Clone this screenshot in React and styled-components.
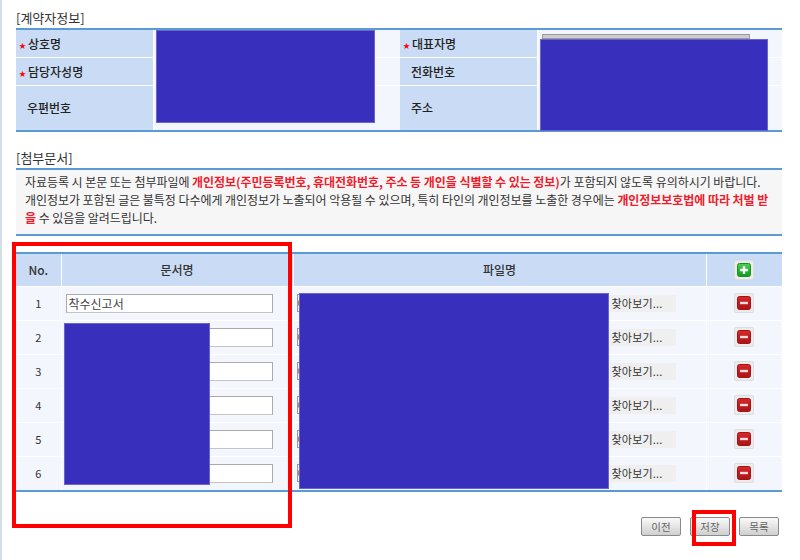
import React from "react";
import styled, { createGlobalStyle } from "styled-components";

const GlobalStyle = createGlobalStyle`
  html, body { margin: 0; padding: 0; background: #fff; }
  body { font-family: "Noto Sans CJK KR", "Noto Sans", sans-serif; font-size: 11px; color: #222; }
`;

const Page = styled.div`
  position: relative;
  width: 800px;
  height: 560px;
  overflow: hidden;
  box-sizing: border-box;
  padding: 11px 18px 0 14px;
  border-left: 2px solid #d3dee8;
`;

const SectionTitle = styled.div`
  height: 16px;
  line-height: 14px;
  font-size: 13px;
  color: #333;
  margin-bottom: 1px;
`;

const InfoTable = styled.table`
  width: 766px;
  table-layout: fixed;
  border-collapse: collapse;
  border-top: 2px solid #5b9bd5;
  border-bottom: 2px solid #5b9bd5;
  margin-bottom: 19px;
`;

const Label = styled.th`
  background: #cadcf5;
  font-weight: 500;
  font-size: 12px;
  text-align: left;
  padding: 0 0 0 ${(p) => (p.$required ? "3px" : "11px")};
  border-bottom: 1px solid #fff;
  color: #222;
  height: ${(p) => p.$h}px;
  white-space: nowrap;
  box-sizing: border-box;
`;

const Value = styled.td`
  background: #f3f6fc;
  border-bottom: 1px solid #fff;
  border-left: 1px solid #fff;
  padding: 0;
`;

const Star = styled.span`
  color: #f00;
  font-size: 7px;
  margin-right: 2px;
  vertical-align: 1px;
`;

const TopInput = styled.div`
  width: 206px;
  height: 3px;
  margin: 0 0 0 4px;
  border: 1px solid #999;
  background: #ccc;
  position: relative;
  top: -7px;
`;

const Notice = styled.div`
  width: 766px;
  height: 68px;
  box-sizing: border-box;
  background: #f6f6f6;
  border-top: 2px solid #5b9bd5;
  border-bottom: 2px solid #5b9bd5;
  padding: 3px 0 0 9px;
  font-size: 12px;
  line-height: 18px;
  letter-spacing: -0.05px;
  color: #333;
  margin-bottom: 16px;
  white-space: nowrap;
`;

const Em = styled.b`
  color: #f01c2c;
  font-weight: 700;
`;

const FileTable = styled.table`
  width: 766px;
  table-layout: fixed;
  border-collapse: collapse;
  border-top: 2px solid #5b9bd5;
  border-bottom: 2px solid #5b9bd5;
  tbody tr:last-child td { height: 35px; }
`;

const HeadCell = styled.th`
  background: #cadcf5;
  height: 33px;
  padding: 0;
  font-size: 12px;
  font-weight: 500;
  color: #333;
  border-left: 1px solid #fff;
  box-sizing: border-box;
  &:first-child { border-left: 0; }
`;

const Cell = styled.td`
  background: #f3f6fc;
  height: 34px;
  padding: 0;
  border-left: 1px solid #fff;
  border-top: 1px solid #fff;
  text-align: ${(p) => p.$align || "center"};
  color: #333;
  font-size: 11px;
  box-sizing: border-box;
  &:first-child { border-left: 0; }
`;

const DocInput = styled.input`
  display: block;
  box-sizing: border-box;
  width: 207px;
  height: 19px;
  margin-left: 4px;
  padding: 0 2px;
  border: 1px solid #aaa;
  border-bottom-color: #c4c4c4;
  background: #fff;
  font-family: inherit;
  font-size: 12px;
  color: #444;
  outline: none;
`;

const FileRow = styled.div`
  display: flex;
  align-items: center;
  justify-content: space-between;
  padding: 0 30px 0 3px;
`;

const FileBox = styled.div`
  width: 12px;
  height: 18px;
  box-sizing: border-box;
  border: 1px solid #999;
  border-right: 0;
  color: #a35a12;
  font-size: 10px;
  line-height: 16px;
  overflow: hidden;
  text-align: left;
`;

const Browse = styled.span`
  width: 66px;
  height: 17px;
  line-height: 17px;
  background: #efefef;
  font-size: 11px;
  color: #333;
  letter-spacing: 0.2px;
  text-align: left;
  padding-left: 2px;
  box-sizing: border-box;
`;

const IconButton = styled.span`
  display: inline-flex;
  align-items: center;
  justify-content: center;
  width: 18px;
  height: 18px;
  background: #ececec;
  border: 1px solid #ddd;
  border-radius: 2px;
  vertical-align: middle;
`;

const Actions = styled.div`
  display: flex;
  justify-content: flex-end;
  gap: 9px;
  width: 763px;
  margin-top: 25px;
`;

const ActionButton = styled.button`
  width: 40px;
  height: 19px;
  padding: 0;
  border: 1px solid #8a8a8a;
  border-radius: 2px;
  background: linear-gradient(#fafafa, #cfcfcf);
  font-family: inherit;
  font-size: 10.5px;
  line-height: 15px;
  color: #666;
`;

const Redaction = styled.div`
  position: absolute;
  left: ${(p) => p.$x}px;
  top: ${(p) => p.$y}px;
  width: ${(p) => p.$w}px;
  height: ${(p) => p.$h}px;
  background: #3830bd;
  box-shadow: inset 0 0 0 1px #6a64d0;
`;

const Highlight = styled.div`
  position: absolute;
  left: ${(p) => p.$x}px;
  top: ${(p) => p.$y}px;
  width: ${(p) => p.$w}px;
  height: ${(p) => p.$h}px;
  box-sizing: border-box;
  border: 4px solid #f00;
`;

const PlusIcon = () => (
  <svg width="14" height="14" viewBox="0 0 14 14">
    <defs>
      <linearGradient id="plusFill" x1="0" y1="0" x2="0" y2="1">
        <stop offset="0" stopColor="#4fd04f" />
        <stop offset="1" stopColor="#129a22" />
      </linearGradient>
    </defs>
    <rect x="0.5" y="0.5" width="13" height="13" rx="2" fill="url(#plusFill)" stroke="#1a8f26" />
    <path d="M7 3.2v7.6M3.2 7h7.6" stroke="#fff" strokeWidth="2.4" />
  </svg>
);

const MinusIcon = () => (
  <svg width="14" height="14" viewBox="0 0 14 14">
    <defs>
      <linearGradient id="minusFill" x1="0" y1="0" x2="0" y2="1">
        <stop offset="0" stopColor="#d9282a" />
        <stop offset="1" stopColor="#a81417" />
      </linearGradient>
    </defs>
    <rect x="0.5" y="0.5" width="13" height="13" rx="2" fill="url(#minusFill)" stroke="#a31316" />
    <path d="M3 7h8" stroke="#f4dcdc" strokeWidth="2.4" />
  </svg>
);

const App = () => {
  return (
    <>
      <GlobalStyle />
      <Page>
        <SectionTitle>[계약자정보]</SectionTitle>
        <InfoTable>
          <colgroup>
            <col style={{ width: 137 }} />
            <col style={{ width: 247 }} />
            <col style={{ width: 137 }} />
            <col />
          </colgroup>
          <tbody>
            <tr>
              <Label $h={28} $required><Star>★</Star>상호명</Label>
              <Value />
              <Label $h={28} $required><Star>★</Star>대표자명</Label>
              <Value><TopInput /></Value>
            </tr>
            <tr>
              <Label $h={28} $required><Star>★</Star>담당자성명</Label>
              <Value />
              <Label $h={28}>전화번호</Label>
              <Value />
            </tr>
            <tr>
              <Label $h={46}>우편번호</Label>
              <Value />
              <Label $h={46}>주소</Label>
              <Value />
            </tr>
          </tbody>
        </InfoTable>

        <SectionTitle>[첨부문서]</SectionTitle>
        <Notice>
          자료등록 시 본문 또는 첨부파일에 <Em>개인정보(주민등록번호, 휴대전화번호, 주소 등 개인을 식별할 수 있는 정보)</Em>가 포함되지 않도록 유의하시기 바랍니다.
          <br />
          개인정보가 포함된 글은 불특정 다수에게 개인정보가 노출되어 악용될 수 있으며, 특히 타인의 개인정보를 노출한 경우에는 <Em>개인정보보호법에 따라 처벌 받</Em>
          <br />
          <Em>을</Em> 수 있음을 알려드립니다.
        </Notice>

        <FileTable>
          <colgroup>
            <col style={{ width: 45 }} />
            <col style={{ width: 232 }} />
            <col style={{ width: 413 }} />
            <col />
          </colgroup>
          <thead>
            <tr>
              <HeadCell>No.</HeadCell>
              <HeadCell>문서명</HeadCell>
              <HeadCell>파일명</HeadCell>
              <HeadCell><IconButton><PlusIcon /></IconButton></HeadCell>
            </tr>
          </thead>
          <tbody>
            {[1, 2, 3, 4, 5, 6].map((n) => (
              <tr key={n}>
                <Cell>{n}</Cell>
                <Cell $align="left">
                  <DocInput readOnly value={n === 1 ? "착수신고서" : ""} />
                </Cell>
                <Cell $align="left">
                  <FileRow>
                    <FileBox>C</FileBox>
                    <Browse>찾아보기...</Browse>
                  </FileRow>
                </Cell>
                <Cell><IconButton><MinusIcon /></IconButton></Cell>
              </tr>
            ))}
          </tbody>
        </FileTable>

        <Actions>
          <ActionButton>이전</ActionButton>
          <ActionButton>저장</ActionButton>
          <ActionButton>목록</ActionButton>
        </Actions>

        <Redaction $x={154} $y={30} $w={219} $h={93} />
        <Redaction $x={538} $y={39} $w={228} $h={92} />
        <Redaction $x={62} $y={323} $w={146} $h={162} />
        <Redaction $x={297} $y={293} $w={310} $h={196} />
        <Highlight $x={10} $y={242} $w={280} $h={286} />
        <Highlight $x={690} $y={510} $w={44} $h={36} />
      </Page>
    </>
  );
};

export default App;
